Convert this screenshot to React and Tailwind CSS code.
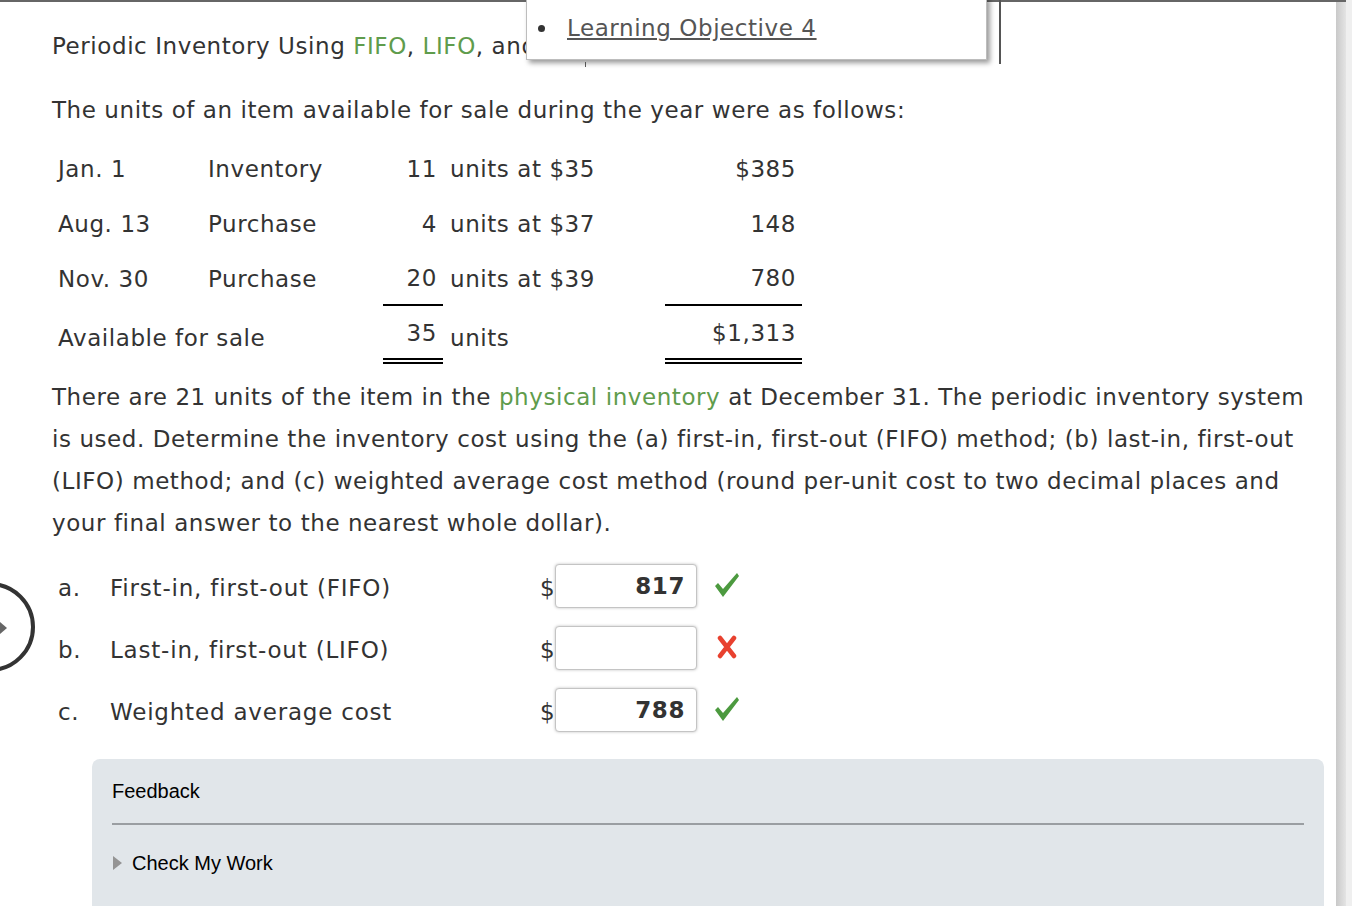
import React from "react";

const rows = [
  { date: "Jan. 1", kind: "Inventory", qty: "11", desc: "units at $35", amt: "$385" },
  { date: "Aug. 13", kind: "Purchase", qty: "4", desc: "units at $37", amt: "148" },
  { date: "Nov. 30", kind: "Purchase", qty: "20", desc: "units at $39", amt: "780" },
];

const answers = [
  { key: "a.", label: "First-in, first-out (FIFO)", value: "817", ok: true },
  { key: "b.", label: "Last-in, first-out (LIFO)", value: "", ok: false },
  { key: "c.", label: "Weighted average cost", value: "788", ok: true },
];

const Check = () => (
  <svg width="28" height="28" viewBox="0 0 28 28">
    <path d="M2 15 L5 12 L10 18 L24 2 L26 5 L10 26 Z" fill="#4c9a3f" />
  </svg>
);

const Cross = () => (
  <svg width="22" height="24" viewBox="0 0 22 24">
    <path d="M4 3 L18 21 M18 3 L4 21" fill="none" stroke="#e8412f" strokeWidth="4.5" strokeLinecap="round" />
  </svg>
);

export default function App() {
  return (
    <div className="relative flex min-h-[906px] w-[1352px] overflow-hidden bg-white text-[#333] font-['DejaVu_Sans',Verdana,sans-serif] tracking-[0.57px]">
      {/* top rule */}
      <div className="absolute left-0 top-0 h-[2px] w-[1346px] bg-[#666]" />

      <div className="relative flex-1 pl-[52px] pr-[16px] pt-[31px]">
        {/* heading, partly hidden by the objectives popup */}
        <h2 className="w-[940px] overflow-hidden whitespace-nowrap text-[23px] leading-[30px]">
          Periodic Inventory Using <span className="text-[#5f9c4c]">FIFO</span>,{" "}
          <span className="text-[#5f9c4c]">LIFO</span>, and Weighted Average Cost Methods
        </h2>

        <p className="mt-[34px] text-[23px] leading-[30px]">
          The units of an item available for sale during the year were as follows:
        </p>

        {/* units table */}
        <div className="mt-[17px] grid grid-cols-[156px_175px_60px_222px_137px] text-[23px] leading-[30px]">
          {rows.map((r, i) => {
            const last = i === rows.length - 1;
            const h = i === 0 ? "h-[54px]" : "h-[55px]";
            return (
              <React.Fragment key={r.date}>
                <div className={`${h} flex items-center pl-[6px]`}>{r.date}</div>
                <div className={`${h} flex items-center`}>{r.kind}</div>
                <div className={`${h} flex items-center justify-end pr-[6px] ${last ? "border-b-2 border-black" : ""}`}>{r.qty}</div>
                <div className={`${h} flex items-center pl-[7px]`}>{r.desc}</div>
                <div className={`${h} flex items-center justify-end pr-[6px] ${last ? "border-b-2 border-black" : ""}`}>{r.amt}</div>
              </React.Fragment>
            );
          })}
          <div className="col-span-2 flex h-[58px] items-center pl-[6px] pt-[6px]">Available for sale</div>
          <div className="flex h-[58px] items-center justify-end border-b-[6px] border-double border-black pr-[6px] pt-[2px]">35</div>
          <div className="flex h-[58px] items-center pl-[7px] pt-[6px]">units</div>
          <div className="flex h-[58px] items-center justify-end border-b-[6px] border-double border-black pr-[6px] pt-[2px]">$1,313</div>
        </div>

        <p className="mt-[12px] whitespace-nowrap text-[23px] leading-[42px]">
          There are 21 units of the item in the <span className="text-[#5f9c4c]">physical inventory</span> at December 31. The periodic inventory system
          <br />
          is used. Determine the inventory cost using the (a) first-in, first-out (FIFO) method; (b) last-in, first-out
          <br />
          (LIFO) method; and (c) weighted average cost method (round per-unit cost to two decimal places and
          <br />
          your final answer to the nearest whole dollar).
        </p>

        {/* answers */}
        <div className="mt-[13px] pl-[6px] text-[23px] leading-[30px]">
          {answers.map((a) => (
            <div key={a.key} className="flex h-[62px] items-center">
              <span className="w-[52px]">{a.key}</span>
              <span className="w-[430px] tracking-[0.8px]">{a.label}</span>
              <span className="w-[15px]">$</span>
              <div className="flex h-[44px] w-[142px] -translate-y-[2px] items-center justify-end rounded-[4px] border border-[#c4c4c4] bg-white pr-[11px] font-bold shadow-[0_0_3px_rgba(0,0,0,0.25)]">
                {a.value}
              </div>
              <span className="ml-[16px] flex w-[28px] -translate-y-[3px] items-center justify-center">
                {a.ok ? <Check /> : <Cross />}
              </span>
            </div>
          ))}
        </div>

        {/* feedback panel */}
        <div className="ml-[40px] mr-[-4px] mt-[16px] h-[160px] rounded-t-[8px] bg-[#e1e6ea] px-[20px] pt-[20px] font-['Liberation_Sans',Arial,sans-serif] text-[20px] leading-[24px] tracking-normal text-black">
          <div>Feedback</div>
          <div className="mt-[20px] h-[2px] bg-[#9a9ea2]" />
          <div className="mt-[26px] flex items-center">
            <span className="ml-px mr-[10px] inline-block h-0 w-0 border-y-[7px] border-l-[9px] border-y-transparent border-l-[#949494]" />
            Check My Work
          </div>
        </div>

        {/* learning objective popup */}
        <div className="absolute left-[526px] top-[-4px] flex h-[64px] w-[461px] items-center border border-[#bdbdbd] bg-white pl-[11px] shadow-[3px_3px_5px_rgba(0,0,0,0.4)]">
          <span className="mr-[22px] inline-block h-[7px] w-[7px] rounded-full bg-[#333]" />
          <a href="#" className="text-[23px] leading-[30px] text-[#555] underline">
            Learning Objective 4
          </a>
        </div>
        <div className="absolute left-[999px] top-0 h-[64px] w-[2px] bg-[#555]" />
        <div className="absolute left-[585px] top-[62px] h-[5px] w-px bg-[#555]" />

        {/* side navigation circle */}
        <div className="absolute left-[-55px] top-[582px] h-[90px] w-[90px] rounded-full border-4 border-[#333]" />
        <div className="absolute left-0 top-[622px] h-0 w-0 border-y-[6px] border-l-[7px] border-y-transparent border-l-[#666] blur-[0.5px]" />
      </div>

      {/* page edge */}
      <div className="flex w-[16px] shrink-0">
        <div className="w-[10px] bg-gradient-to-r from-[#c9c9c9] to-[#e4e4e4]" />
        <div className="w-[6px] bg-[#efefef]" />
      </div>
    </div>
  );
}
